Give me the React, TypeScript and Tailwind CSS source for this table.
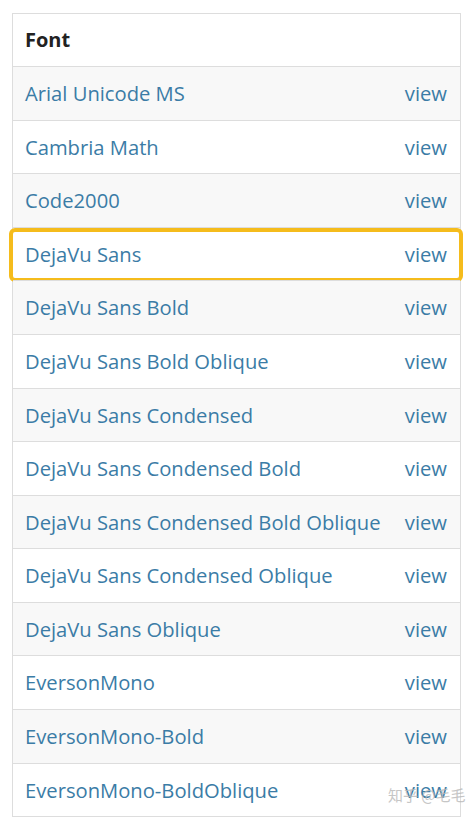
import React from "react";

const rows: { name: string; h: string }[] = [
  { name: "Arial Unicode MS", h: "h-[54px]" },
  { name: "Cambria Math", h: "h-[53px]" },
  { name: "Code2000", h: "h-[54px]" },
  { name: "DejaVu Sans", h: "h-[53px]" },
  { name: "DejaVu Sans Bold", h: "h-[54px]" },
  { name: "DejaVu Sans Bold Oblique", h: "h-[54px]" },
  { name: "DejaVu Sans Condensed", h: "h-[53px]" },
  { name: "DejaVu Sans Condensed Bold", h: "h-[54px]" },
  { name: "DejaVu Sans Condensed Bold Oblique", h: "h-[53px]" },
  { name: "DejaVu Sans Condensed Oblique", h: "h-[54px]" },
  { name: "DejaVu Sans Oblique", h: "h-[53px]" },
  { name: "EversonMono", h: "h-[54px]" },
  { name: "EversonMono-Bold", h: "h-[54px]" },
  { name: "EversonMono-BoldOblique", h: "h-[53px]" },
];

export default function App() {
  return (
    <div
      className="w-[474px] h-[820px] bg-white overflow-hidden relative"
      style={{ fontFamily: '"Open Sans", "Noto Sans", sans-serif' }}
    >
      <div className="ml-[12px] mt-[13px] w-[449px] border-x border-[#dddddd]">
        <div className="h-[53px] border-t border-[#dddddd] flex items-center px-[12px] bg-white">
          <span className="text-[20px] font-bold text-[#222222]">Font</span>
        </div>
        {rows.map((r, i) => (
          <div
            key={r.name}
            className={`${r.h} relative border-t border-[#dddddd] flex items-center justify-between pl-[12px] pr-[13px] ${
              i % 2 === 0 ? "bg-[#f8f8f8]" : "bg-white"
            }`}
          >
            {r.name === "DejaVu Sans" && (
              <div className="absolute left-[-4px] right-[-3px] top-[0px] bottom-[-2px] border-[4px] border-[#f5bc1c] rounded-[6px] bg-white" />
            )}
            <span className="relative text-[20.2px] text-[#3b7ca6]">{r.name}</span>
            <span className="relative text-[20.2px] text-[#3b7ca6]">view</span>
          </div>
        ))}
        <div className="border-t border-[#dddddd]" />
      </div>
      <div
        className="absolute left-[388px] top-[784px] text-[15px] text-[#b8b8b8] opacity-80"
        style={{ fontFamily: '"Noto Sans CJK SC", "Noto Sans", sans-serif' }}
      >
        知乎 @毛毛
      </div>
    </div>
  );
}
